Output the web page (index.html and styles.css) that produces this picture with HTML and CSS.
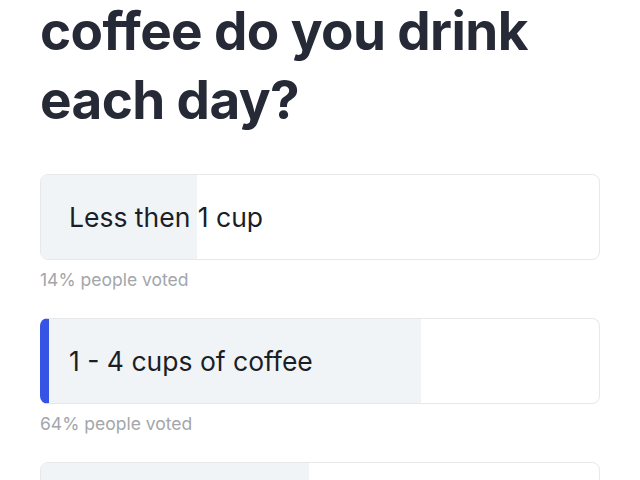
FILE: index.html
```html
<!DOCTYPE html>
<html>
<head>
<meta charset="utf-8">
<link rel="stylesheet" href="styles.css">
</head>
<body>
<main class="poll">
  <h1 class="question">coffee do you drink each day?</h1>
  <div class="options">
    <div class="option">
      <div class="card">
        <div class="fill" style="width:156px"></div>
        <span class="label">Less then 1 cup</span>
      </div>
      <p class="votes">14% people voted</p>
    </div>
    <div class="option">
      <div class="card selected">
        <div class="fill" style="width:372px"></div>
        <span class="label">1 - 4 cups of coffee</span>
      </div>
      <p class="votes">64% people voted</p>
    </div>
    <div class="option">
      <div class="card">
        <div class="fill" style="width:268px"></div>
      </div>
    </div>
  </div>
</main>
</body>
</html>
```
FILE: styles.css
```css
html, body {
  margin: 0;
  padding: 0;
  background: #ffffff;
}
body {
  font-family: Inter, "Noto Sans", sans-serif;
  color: #1f2430;
}
.poll {
  padding: 0 40px 0 40px;
}
.question {
  margin: -3px 0 0 0;
  font-size: 53px;
  line-height: 69px;
  font-weight: 700;
  color: #252a36;
  letter-spacing: -0.6px;
}
.options {
  margin-top: 39px;
  display: flex;
  flex-direction: column;
  gap: 27px;
}
.option {
  display: flex;
  flex-direction: column;
}
.card {
  position: relative;
  height: 86px;
  border: 1px solid #e6e9ec;
  border-radius: 8px;
  overflow: hidden;
  display: flex;
  align-items: center;
  padding-left: 28px;
  box-sizing: border-box;
}
.card.selected {
  border-left: 9px solid #3553e4;
  padding-left: 20px;
}
.fill {
  position: absolute;
  left: 0;
  top: 0;
  bottom: 0;
  background: #f1f4f7;
}
.label {
  position: relative;
  font-size: 26.5px;
  color: #1a1e27;
}
.votes {
  margin: 9px 0 0 0;
  font-size: 17.5px;
  color: #a3a6ab;
  line-height: 22px;
}
```
